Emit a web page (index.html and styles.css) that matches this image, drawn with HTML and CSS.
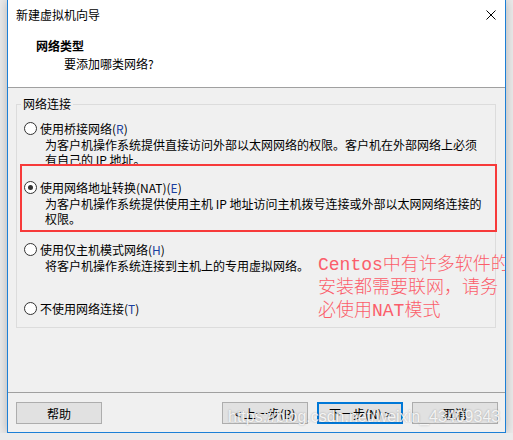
FILE: index.html
```html
<!DOCTYPE html>
<html lang="zh-CN">
  <head>
    <meta charset="UTF-8" />
    <title>新建虚拟机向导</title>
    <link rel="stylesheet" href="styles.css">
  </head>
  <body>
    <div class="window">
      <div class="titlebar">
        <span>新建虚拟机向导</span>
        <svg class="close" width="10" height="10" viewBox="0 0 10 10">
          <path d="M0.5 0.5 L9.5 9.5 M9.5 0.5 L0.5 9.5" stroke="#000" stroke-width="1" fill="none" />
        </svg>
      </div>

      <div class="header">
        <div class="header-title">网络类型</div>
        <div class="header-sub">要添加哪类网络?</div>
      </div>

      <div class="content">
        <fieldset class="group">
          <legend>网络连接</legend>

          <div class="option">
            <div class="radio-row"><span class="radio"></span>使用桥接网络(<span class="key">R</span>)</div>
            <div class="desc">为客户机操作系统提供直接访问外部以太网网络的权限。客户机在外部网络上必须<br>有自己的 IP 地址。</div>
          </div>

          <div class="option opt-nat">
            <div class="radio-row"><span class="radio checked"></span>使用网络地址转换(NAT)(<span class="key">E</span>)</div>
            <div class="desc">为客户机操作系统提供使用主机 IP 地址访问主机拨号连接或外部以太网网络连接的<br>权限。</div>
          </div>

          <div class="option opt-host">
            <div class="radio-row"><span class="radio"></span>使用仅主机模式网络(<span class="key">H</span>)</div>
            <div class="desc">将客户机操作系统连接到主机上的专用虚拟网络。</div>
          </div>

          <div class="option opt-none">
            <div class="radio-row"><span class="radio"></span>不使用网络连接(<span class="key">T</span>)</div>
          </div>
        </fieldset>
      </div>

      <div class="footer">
        <button class="btn">帮助</button>
        <div class="nav-buttons">
          <button class="btn">&lt; 上一步(B)</button>
          <button class="btn btn-default">下一步(N) &gt;</button>
          <button class="btn">取消</button>
        </div>
      </div>

      <!-- annotations drawn over the dialog -->
      <div class="mark-box"></div>
      <div class="note">Centos中有许多软件的<br>安装都需要联网，请务<br>必使用NAT模式</div>
      <div class="watermark">https://blog.csdn.net/weixin_43409343</div>
    </div>
  </body>
</html>
```

FILE: styles.css
```css
body {
  margin: 0;
  padding: 0;
  background-color: #ebebeb;
  font-family: "Noto Sans CJK SC", "Noto Sans", sans-serif;
  font-size: 12px;
  color: #000;
}
.window {
  position: relative;
  display: flex;
  flex-direction: column;
  margin-left: 7px;
  width: 497px;
  height: 432px;
  border: 1px solid #1c7fd6;
  border-top: none;
  background: #f0f0f0;
  overflow: hidden;
  box-shadow: 0 0 10px rgba(0, 0, 0, 0.25);
}
.titlebar {
  height: 30px;
  display: flex;
  align-items: center;
  justify-content: space-between;
  padding: 0 9px 0 8px;
  background: #fff;
  line-height: 16px;
}
.header {
  height: 57px;
  background: #fff;
  border-bottom: 1px solid #a0a0a0;
  line-height: 16px;
}
.header-title {
  font-weight: bold;
  padding: 8px 0 0 28px;
}
.header-sub {
  padding: 2px 0 0 56px;
}
.content {
  flex: 1;
  padding: 8px 9px 0 8px;
}
.group {
  margin: 0;
  border: 1px solid #dcdcdc;
  padding: 0 4px 10px;
}
.group legend {
  padding: 0 2px;
  line-height: 16px;
}
.option {
  margin-top: 8px;
}
.opt-nat {
  margin-top: 12px;
}
.opt-host {
  margin-top: 15px;
}
.opt-none {
  margin-top: 27px;
}
.radio-row {
  display: flex;
  align-items: center;
  line-height: 17px;
}
.radio {
  position: relative;
  width: 11px;
  height: 11px;
  margin: 0 3px 0 3px;
  border: 1px solid #333;
  border-radius: 50%;
  background: #fff;
}
.radio.checked::after {
  content: "";
  position: absolute;
  left: 3px;
  top: 3px;
  width: 5px;
  height: 5px;
  border-radius: 50%;
  background: #333;
}
.key {
  color: #1a3fa0;
}
.desc {
  padding-left: 24px;
  line-height: 15px;
}
.footer {
  display: flex;
  justify-content: space-between;
  border-top: 1px solid #a0a0a0;
  padding: 9px 7px 8px 8px;
}
.nav-buttons {
  display: flex;
  gap: 9px;
}
.btn {
  width: 86px;
  height: 22px;
  padding: 0;
  font-family: inherit;
  font-size: 12px;
  color: #000;
  background: #e1e1e1;
  border: 1px solid #adadad;
}
.btn-default {
  border: 2px solid #0078d7;
}
.mark-box {
  position: absolute;
  left: 12px;
  top: 164px;
  width: 473px;
  height: 64px;
  border: 2px solid #f73a3a;
}
.note {
  position: absolute;
  left: 310px;
  top: 254px;
  width: 220px;
  font-family: "Liberation Mono", "Noto Sans CJK SC", monospace;
  font-size: 18px;
  font-weight: 300;
  line-height: 23px;
  color: #fb5d6a;
  white-space: nowrap;
}
.watermark {
  position: absolute;
  left: 220px;
  top: 408px;
  font-family: "Liberation Sans", sans-serif;
  font-size: 16px;
  line-height: 18px;
  color: rgba(255, 255, 255, 0.85);
  text-shadow: 0 0 2px rgba(0, 0, 0, 0.3);
  white-space: nowrap;
}
```
